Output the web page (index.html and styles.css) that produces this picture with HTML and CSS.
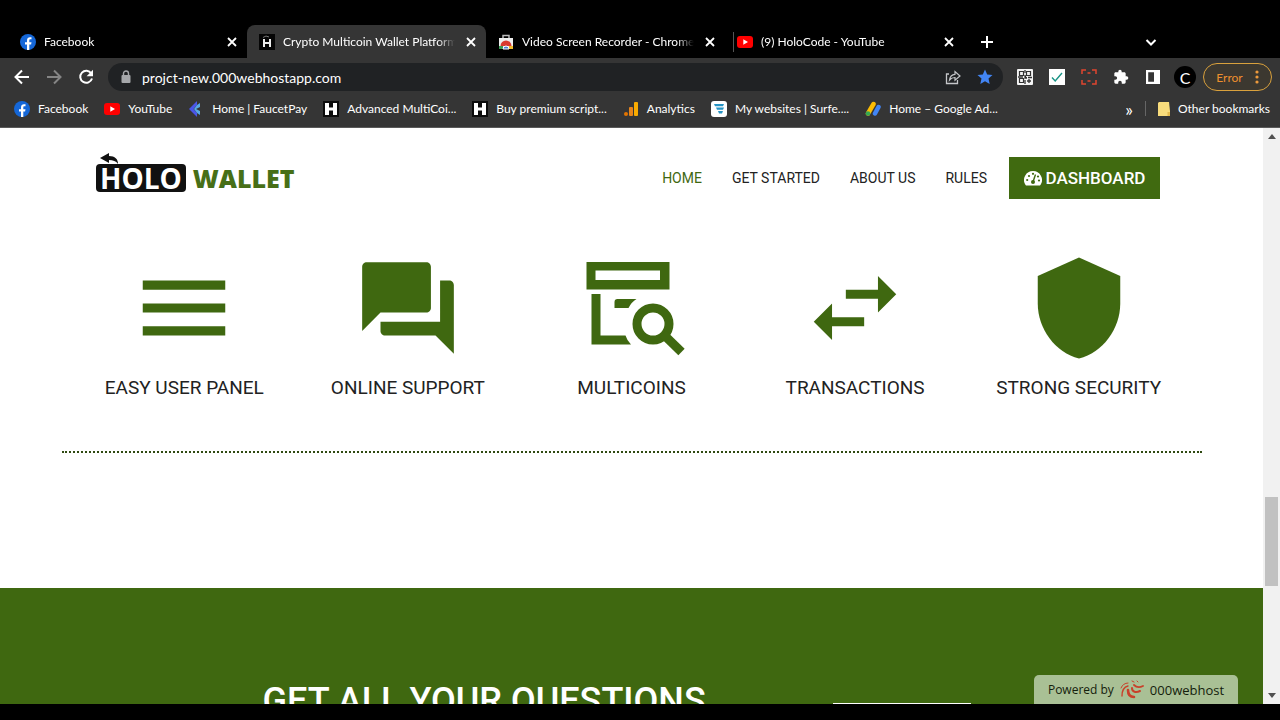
FILE: index.html
```html
<!DOCTYPE html>
<html lang="en">

<head>
    <meta charset="UTF-8">
    <meta name="viewport" content="width=device-width, initial-scale=1.0">
    <title>Crypto Multicoin Wallet Platform</title>
    <link rel="stylesheet" href="styles.css">
</head>

<body>
    <!-- shared icons -->
    <svg class="sprite" aria-hidden="true">
        <symbol id="facebook" viewBox="0 0 16 16">
            <circle cx="8" cy="8" r="8" fill="#1567d8" />
            <path d="M7 16v-5.500H5V8.200h2V6.500c0-2.200 1.200-3.300 3-3.300l1.500.1v2h-1c-1 0-1.200.5-1.200 1.200v1.700h2.200l-.4 2.300H9.300V16z" fill="#fff" />
        </symbol>
        <symbol id="youtube" viewBox="0 0 16 16">
            <rect y="2" width="16" height="12" rx="3" fill="#f00" />
            <path d="M6.300 5.200v5.600L11 8z" fill="#fff" />
        </symbol>
        <symbol id="holo" viewBox="0 0 16 16">
            <rect width="16" height="16" fill="#0b0b0b" />
            <path d="M2 2h4v4.500h4V2h4v12h-4V9.500H6V14H2z" fill="#fff" />
        </symbol>
        <symbol id="close" viewBox="0 0 10 10">
            <path d="M1 1l8 8M9 1L1 9" stroke="#fff" stroke-width="1.800" />
        </symbol>
    </svg>

    <div class="tabs">
        <div class="tab">
            <svg class="icon"><use href="#facebook" /></svg>
            <span class="tab-title">Facebook</span>
            <button class="close" aria-label="Close tab"><svg><use href="#close" /></svg></button>
        </div>
        <div class="tab active">
            <svg class="icon" viewBox="0 0 16 16">
                <rect width="16" height="16" fill="#050505" />
                <path d="M5 5v8M11 5v8M5 9h6" stroke="#eee" stroke-width="2" />
                <path d="M4 3.500l3-1.500 3 1" stroke="#777" fill="none" />
            </svg>
            <span class="tab-title">Crypto Multicoin Wallet Platform</span>
            <button class="close" aria-label="Close tab"><svg><use href="#close" /></svg></button>
        </div>
        <div class="tab">
            <svg class="icon" viewBox="0 0 16 16">
                <path d="M5 4V1.500h6V4" fill="none" stroke="#bbb" stroke-width="1.500" />
                <path d="M1 4h14v11H1z" fill="#eee" />
                <path d="M2.500 12a5.500 5.500 0 0 1 11 0z" fill="#d93a30" />
                <path d="M1 12h4v3H1z" fill="#3b9a55" />
                <path d="M11 12h4v3h-4z" fill="#f0b92c" />
                <path d="M5 15a3 3 0 0 1 6 0z" fill="#4a7fd6" stroke="#fff" />
            </svg>
            <span class="tab-title">Video Screen Recorder - Chrome</span>
            <button class="close" aria-label="Close tab"><svg><use href="#close" /></svg></button>
        </div>
        <div class="tab divided">
            <svg class="icon"><use href="#youtube" /></svg>
            <span class="tab-title">(9) HoloCode - YouTube</span>
            <button class="close" aria-label="Close tab"><svg><use href="#close" /></svg></button>
        </div>
        <button class="new-tab" aria-label="New tab">
            <svg viewBox="0 0 12 12"><path d="M6 0v12M0 6h12" stroke="#fff" stroke-width="2" /></svg>
        </button>
        <button class="tab-search" aria-label="Search tabs">
            <svg viewBox="0 0 12 12"><path d="M1.500 4L6 8.500 10.500 4" fill="none" stroke="#fff" stroke-width="2" /></svg>
        </button>
    </div>

    <div class="toolbar">
        <button class="tool" aria-label="Back">
            <svg viewBox="0 0 16 16"><path d="M15 8H2M8 1.500L1.500 8 8 14.500" fill="none" stroke="#fff" stroke-width="2" /></svg>
        </button>
        <button class="tool" aria-label="Forward">
            <svg viewBox="0 0 16 16"><path d="M1 8h13M8 1.500L14.500 8 8 14.500" fill="none" stroke="#858585" stroke-width="2" /></svg>
        </button>
        <button class="tool" aria-label="Reload">
            <svg viewBox="0 0 16 16">
                <path d="M13.300 4.500A6 6 0 1 0 14 9.500" fill="none" stroke="#fff" stroke-width="2" />
                <path d="M15 .8v6.400H8.600z" fill="#fff" />
            </svg>
        </button>
        <div class="address">
            <svg class="lock" viewBox="0 0 10 14">
                <path d="M2.500 6V3.500a2.500 2.500 0 0 1 5 0V6" fill="none" stroke="#a5a7aa" stroke-width="1.400" />
                <rect x=".5" y="5" width="9" height="8" rx="1" fill="#a5a7aa" />
            </svg>
            <input type="text" aria-label="Address" value="projct-new.000webhostapp.com">
            <button class="tool" aria-label="Share">
                <svg viewBox="0 0 16 16">
                    <path d="M4 5H1.500v9.500h11V11" fill="none" stroke="#c4c6c9" stroke-width="1.300" />
                    <path d="M4.500 11c.5-4 2.500-5.500 5.500-5.700V2.500L15 7l-5 4.300V8.500c-2.500 0-4 .7-5.500 2.500z" fill="none" stroke="#c4c6c9" stroke-width="1.200" />
                </svg>
            </button>
            <button class="tool" aria-label="Bookmark this page">
                <svg viewBox="0 0 16 16"><path d="M8 .5l2.200 5 5.300.5-4 3.600 1.200 5.400L8 12.200 3.300 15l1.200-5.400L.5 6l5.300-.5z" fill="#4285f4" /></svg>
            </button>
        </div>
        <div class="extensions">
            <button class="tool" aria-label="QR code">
                <svg viewBox="0 0 16 16">
                    <rect width="16" height="16" rx="1" fill="#f4f4f4" />
                    <path d="M2.500 2.500h4v4h-4zM9.500 2.500h4v4h-4zM2.500 9.500h4v4h-4z" fill="none" stroke="#333" stroke-width="1.200" />
                    <path d="M8 1v3M8 6v3h2M1 8h5M11 8.500h4M8 11v4M12 10v4M10 12h4" stroke="#333" stroke-width="1.300" />
                </svg>
            </button>
            <button class="tool" aria-label="Checker">
                <svg viewBox="0 0 16 16">
                    <rect width="16" height="16" fill="#fff" />
                    <path d="M3 8.500L6.200 12 13 4" fill="none" stroke="#189384" stroke-width="1.400" />
                </svg>
            </button>
            <button class="tool" aria-label="Capture area">
                <svg viewBox="0 0 16 16"><path d="M1 5V1h4M11 1h4v4M15 11v4h-4M5 15H1v-4M6.500 4h3M6.500 12h3" fill="none" stroke="#e0452f" stroke-width="1.500" /></svg>
            </button>
            <button class="tool" aria-label="Extensions">
                <svg viewBox="0 0 24 24"><path d="M20.500 11H19V7c0-1.100-.9-2-2-2h-4V3.500a2.500 2.500 0 0 0-5 0V5H4c-1.100 0-2 .9-2 2v3.800h1.500a2.700 2.700 0 0 1 0 5.400H2V20c0 1.100.9 2 2 2h3.800v-1.500a2.700 2.700 0 0 1 5.400 0V22H17c1.100 0 2-.9 2-2v-4h1.500a2.500 2.500 0 0 0 0-5z" fill="#fff" /></svg>
            </button>
            <button class="tool" aria-label="Side panel">
                <svg viewBox="0 0 16 16"><path d="M1 1h14v14H1zM3.200 3.200v9.600H9V3.200z" fill="#fff" fill-rule="evenodd" /></svg>
            </button>
            <button class="avatar" aria-label="Profile">C</button>
            <button class="error">Error
                <svg viewBox="0 0 4 14"><circle cx="2" cy="2" r="1.600" /><circle cx="2" cy="7" r="1.600" /><circle cx="2" cy="12" r="1.600" /></svg>
            </button>
        </div>
    </div>

    <div class="bookmarks">
        <a href="#"><svg class="icon"><use href="#facebook" /></svg>Facebook</a>
        <a href="#"><svg class="icon"><use href="#youtube" /></svg>YouTube</a>
        <a href="#">
            <svg class="icon" viewBox="0 0 16 16">
                <path d="M9 0v4L5.500 8 9 12v4L1 8z" fill="#4a55e8" />
                <path d="M9 4l3-2v4L8 8l4 2v4l-3-2-3-4z" fill="#56a8e6" />
            </svg>Home | FaucetPay</a>
        <a href="#"><svg class="icon"><use href="#holo" /></svg>Advanced MultiCoi...</a>
        <a href="#"><svg class="icon"><use href="#holo" /></svg>Buy premium script...</a>
        <a href="#">
            <svg class="icon" viewBox="0 0 16 16">
                <circle cx="3" cy="13" r="2" fill="#e37400" />
                <rect x="6" y="6" width="4" height="9" rx="1" fill="#e8851b" />
                <rect x="11" y="1" width="4" height="14" rx="1" fill="#f9ab00" />
            </svg>Analytics</a>
        <a href="#">
            <svg class="icon" viewBox="0 0 16 16">
                <rect width="16" height="16" rx="3" fill="#fff" />
                <path d="M3 3h10l-1 2.200H4zM5 6.500h8l-1 2.200H6zM7 10h5l-1 2.500H8z" fill="#2593c4" />
            </svg>My websites | Surfe....</a>
        <a href="#">
            <svg class="icon" viewBox="0 0 16 16">
                <path d="M8.500 3L3 12.500" stroke="#fbbc04" stroke-width="4.500" stroke-linecap="round" />
                <path d="M13.500 6L10 12.500" stroke="#4285f4" stroke-width="4.500" stroke-linecap="round" />
                <circle cx="3" cy="12.500" r="2.300" fill="#34a853" />
            </svg>Home – Google Ad...</a>
        <button class="more" aria-label="More bookmarks">»</button>
        <a href="#" class="other">
            <svg class="folder" viewBox="0 0 12 14"><path d="M0 1l1-1h10l1 9v5H0z" fill="#f8dc7c" /><path d="M9.500 10H12v4H9.500z" fill="#e3b94c" /></svg>Other bookmarks</a>
    </div>

    <div class="window">
        <div class="page">
            <header>
                <a href="#" class="logo">
                    <svg class="logo-arrow" viewBox="0 0 20 12"><path d="M0 5L9 0v3c6 0 9 3 9 8-2-3-5-4-9-4v3z" fill="#111" /></svg>
                    <span class="logo-holo">HOLO</span>
                    <span class="logo-wallet">WALLET</span>
                </a>
                <nav>
                    <a href="#" class="current">HOME</a>
                    <a href="#">GET STARTED</a>
                    <a href="#">ABOUT US</a>
                    <a href="#">RULES</a>
                    <a href="#" class="dashboard">
                        <svg viewBox="0 0 18 16">
                            <path d="M9 1a9 9 0 0 0-7.600 13.800l.6.700h14l.6-.7A9 9 0 0 0 9 1z" fill="#fff" />
                            <path d="M11.500 4.500L9.300 11" stroke="#406a10" stroke-width="1.400" />
                            <g fill="#406a10"><circle cx="9" cy="12" r="2" /><circle cx="3.200" cy="10" r="1.100" /><circle cx="5" cy="6" r="1.100" /><circle cx="9" cy="3.800" r="1.100" /><circle cx="14" cy="6.500" r="1.100" /><circle cx="15" cy="10.500" r="1.100" /></g>
                        </svg>DASHBOARD</a>
                </nav>
            </header>

            <div class="features">
                <div class="feature">
                    <svg viewBox="0 0 24 24"><path d="M3 18h18v-2H3zM3 13h18v-2H3zM3 6v2h18V6z" /></svg>
                    <h3>EASY USER PANEL</h3>
                </div>
                <div class="feature">
                    <svg viewBox="0 0 24 24"><path d="M21 6h-2v9H6v2c0 .55.45 1 1 1h11l4 4V7c0-.55-.45-1-1-1zm-4 6V3c0-.55-.45-1-1-1H3c-.55 0-1 .45-1 1v14l4-4h10c.55 0 1-.45 1-1z" /></svg>
                    <h3>ONLINE SUPPORT</h3>
                </div>
                <div class="feature">
                    <svg viewBox="0 0 110 110">
                        <path d="M10.500 9h83v27.500h-83zM19.500 17.500V27H84v-9.500z" fill-rule="evenodd" />
                        <path d="M15.500 41h9v41.500h25q1.500 5 5.500 9H15.500zM38.500 49q0-3 3-3h19q-5 3-8 9h-14z" />
                        <circle cx="77" cy="71" r="16" fill="none" stroke="#3f6810" stroke-width="9" />
                        <path d="M87 81l18.500 18" stroke="#3f6810" stroke-width="9" />
                    </svg>
                    <h3>MULTICOINS</h3>
                </div>
                <div class="feature">
                    <svg viewBox="0 0 24 24"><path d="M6.990 11L3 15l3.990 4v-3H14v-2H6.990v-3zM21 9l-3.990-4v3H10v2h7.010v3L21 9z" /></svg>
                    <h3>TRANSACTIONS</h3>
                </div>
                <div class="feature">
                    <svg viewBox="0 0 24 24"><path d="M12 1L3 5v6c0 5.550 3.840 10.740 9 12 5.160-1.260 9-6.450 9-12V5l-9-4z" /></svg>
                    <h3>STRONG SECURITY</h3>
                </div>
            </div>

            <div class="questions">
                <h2>GET ALL YOUR QUESTIONS</h2>
                <div class="panel"></div>
            </div>

            <a href="#" class="powered">Powered by
                <svg viewBox="0 0 24 20">
                    <g fill="none" stroke="#c9402a" stroke-linecap="round">
                        <path d="M8 10c0 4 2 7 6 7" stroke-width="2.600" />
                        <path d="M12 8c0 4 4 5 8 3" stroke-width="2" />
                        <path d="M14 5c2 2 5 3 9 1" stroke-width="1.800" />
                        <path d="M8 6C4 7 2 11 2 16" stroke-width="1.400" />
                        <path d="M8 3C5 3 2 5 1 8M12 1l2 1M17 1l1 1" stroke-width="1" />
                    </g>
                </svg>
                <span>000webhost</span>
            </a>
        </div>
        <div class="scrollbar">
            <svg viewBox="0 0 8 5"><path d="M4 0l4 5H0z" fill="#505050" /></svg>
            <div class="track">
                <div class="thumb"></div>
            </div>
            <svg viewBox="0 0 8 5"><path d="M4 5L0 0h8z" fill="#505050" /></svg>
        </div>
    </div>
</body>

</html>
```
FILE: styles.css
```css
:root {
    --green: #3f6810;
    --chrome: #353535;
    --BrowserFont: Lato, "Open Sans", sans-serif;
    --SiteFont: Roboto, sans-serif;
}

* {
    box-sizing: border-box;
}

body {
    display: flex;
    flex-direction: column;
    height: 100vh;
    margin: 0;
    padding: 25px 0 16px;
    overflow: hidden;
    background-color: #000;
    color: #fff;
    font-family: var(--BrowserFont);
    font-size: 12px;
}

a {
    color: inherit;
    text-decoration: none;
}

button {
    display: flex;
    align-items: center;
    justify-content: center;
    flex: none;
    padding: 0;
    border: none;
    background: none;
    color: inherit;
    font-family: inherit;
}

h2,
h3 {
    margin: 0;
}

.sprite {
    position: absolute;
    width: 0;
    height: 0;
}

.icon {
    flex: none;
    width: 16px;
    height: 16px;
}

/* tabs */
.tabs {
    display: flex;
    align-items: center;
    flex: none;
    height: 33px;
    padding-left: 8px;
}

.tab {
    display: flex;
    align-items: center;
    gap: 8px;
    width: 239px;
    height: 33px;
    padding: 0 7px 0 12px;
    border-radius: 8px 8px 0 0;
}

.tab.active {
    background-color: var(--chrome);
}

.tab.divided {
    background: linear-gradient(#555, #555) 8px 7px / 1px 20px no-repeat;
}

.tab-title {
    flex: 1;
    overflow: hidden;
    white-space: nowrap;
    mask-image: linear-gradient(to right, #000 90%, transparent);
}

.close {
    width: 16px;
    height: 16px;
}

.close svg {
    width: 10px;
    height: 10px;
}

.new-tab,
.tab-search {
    width: 28px;
    height: 28px;
    margin-left: 9px;
}

.tab-search {
    margin-left: auto;
    margin-right: 115px;
}

.new-tab svg,
.tab-search svg {
    width: 12px;
    height: 12px;
}

/* toolbar */
.toolbar {
    display: flex;
    align-items: center;
    flex: none;
    height: 38px;
    padding: 0 8px 0 6px;
    background-color: var(--chrome);
}

.tool {
    width: 32px;
    height: 28px;
}

.tool svg {
    width: 16px;
    height: 16px;
}

.address {
    display: flex;
    align-items: center;
    flex: 1;
    height: 28px;
    margin: 0 6px;
    padding: 0 2px 0 13px;
    border-radius: 14px;
    background-color: #202224;
}

.lock {
    width: 10px;
    height: 14px;
    margin-right: 11px;
}

.address input {
    flex: 1;
    padding: 0;
    border: none;
    outline: none;
    background: none;
    color: #fff;
    font-family: inherit;
    font-size: 14px;
}

.extensions {
    display: flex;
    align-items: center;
}

.avatar {
    width: 22px;
    height: 22px;
    margin: 0 7px 0 5px;
    border-radius: 50%;
    background-color: #000;
    font-size: 16px;
}

.error {
    gap: 12px;
    width: 69px;
    height: 28px;
    border: 1px solid #d9a13d;
    border-radius: 14px;
    background-color: #3c3830;
    color: #ee8f2e;
    font-size: 12px;
}

.error svg {
    width: 4px;
    height: 14px;
    fill: #ee9a3c;
}

/* bookmarks */
.bookmarks {
    display: flex;
    align-items: center;
    flex: none;
    gap: 16px;
    height: 32px;
    padding: 0 10px 6px 14px;
    border-bottom: 1px solid #5a5a5a;
    background-color: var(--chrome);
    white-space: nowrap;
}

.bookmarks a {
    display: flex;
    align-items: center;
    gap: 8px;
}

.more {
    margin-left: auto;
    margin-right: -4px;
    font-size: 18px;
}

.bookmarks .other {
    padding-left: 12px;
    border-left: 1px solid #666;
}

.folder {
    width: 12px;
    height: 14px;
}

/* page */
.window {
    display: flex;
    flex: 1;
    min-height: 0;
}

.page {
    position: relative;
    flex: 1;
    overflow: hidden;
    background-color: #fff;
    color: #222;
    font-family: var(--SiteFont);
}

header {
    display: flex;
    align-items: center;
    justify-content: space-between;
    height: 99px;
    padding: 0 103px 0 96px;
}

.logo {
    display: flex;
    align-items: center;
    gap: 7px;
    position: relative;
    font-family: "Open Sans", sans-serif;
    font-weight: 700;
}

.logo-arrow {
    position: absolute;
    top: -11px;
    left: 4px;
    width: 20px;
    height: 12px;
}

.logo-holo {
    padding: 0 4px;
    border-radius: 4px;
    background-color: #111;
    color: #fff;
    font-size: 28px;
    line-height: 28px;
}

.logo-wallet {
    color: #476f17;
    font-size: 25px;
    font-weight: 800;
    line-height: 28px;
}

nav {
    display: flex;
    align-items: center;
    gap: 30px;
    font-size: 14px;
}

nav .current {
    color: var(--green);
}

nav .dashboard {
    display: flex;
    align-items: center;
    justify-content: center;
    gap: 4px;
    width: 151px;
    height: 42px;
    margin-left: -8px;
    background-color: #406a10;
    color: #fff;
    font-size: 17px;
    font-weight: 500;
}

.dashboard svg {
    width: 18px;
    height: 16px;
}

.features {
    display: grid;
    grid-template-columns: repeat(5, 1fr);
    max-width: 1140px;
    margin: 0 auto;
    padding: 26px 11px 49px;
    border-bottom: 2px dotted #2f4a12;
}

.feature {
    text-align: center;
}

.feature svg {
    display: block;
    width: 110px;
    height: 110px;
    margin: 0 auto 11px;
    overflow: visible;
    fill: var(--green);
}

.feature h3 {
    font-size: 19px;
    font-weight: 400;
    line-height: 28px;
}

.questions {
    display: grid;
    grid-template-columns: 460px 138px;
    column-gap: 110px;
    justify-content: center;
    height: 400px;
    margin-top: 135px;
    padding: 91px 30px 0 0;
    background-color: var(--green);
    color: #fff;
}

.questions h2 {
    font-size: 36px;
    font-weight: 500;
    line-height: 44px;
}

.panel {
    margin-top: 24px;
    background-color: #fff;
}

.powered {
    display: flex;
    align-items: center;
    justify-content: center;
    gap: 6px;
    position: absolute;
    right: 25px;
    bottom: 0;
    width: 204px;
    height: 29px;
    border-radius: 5px 5px 0 0;
    background-color: #a9c095;
    color: #14200c;
    font-family: "Open Sans", sans-serif;
    font-size: 12px;
}

.powered svg {
    width: 24px;
    height: 20px;
}

.powered span {
    font-size: 13px;
}

.scrollbar {
    display: flex;
    flex-direction: column;
    align-items: center;
    width: 17px;
    padding: 6px 0;
    background-color: #f1f1f1;
}

.scrollbar svg {
    flex: none;
    width: 8px;
    height: 5px;
}

.track {
    display: grid;
    grid-template-rows: 358fr 89fr 107fr;
    flex: 1;
    width: 13px;
}

.thumb {
    grid-row: 2;
    background-color: #c1c1c1;
}
```
